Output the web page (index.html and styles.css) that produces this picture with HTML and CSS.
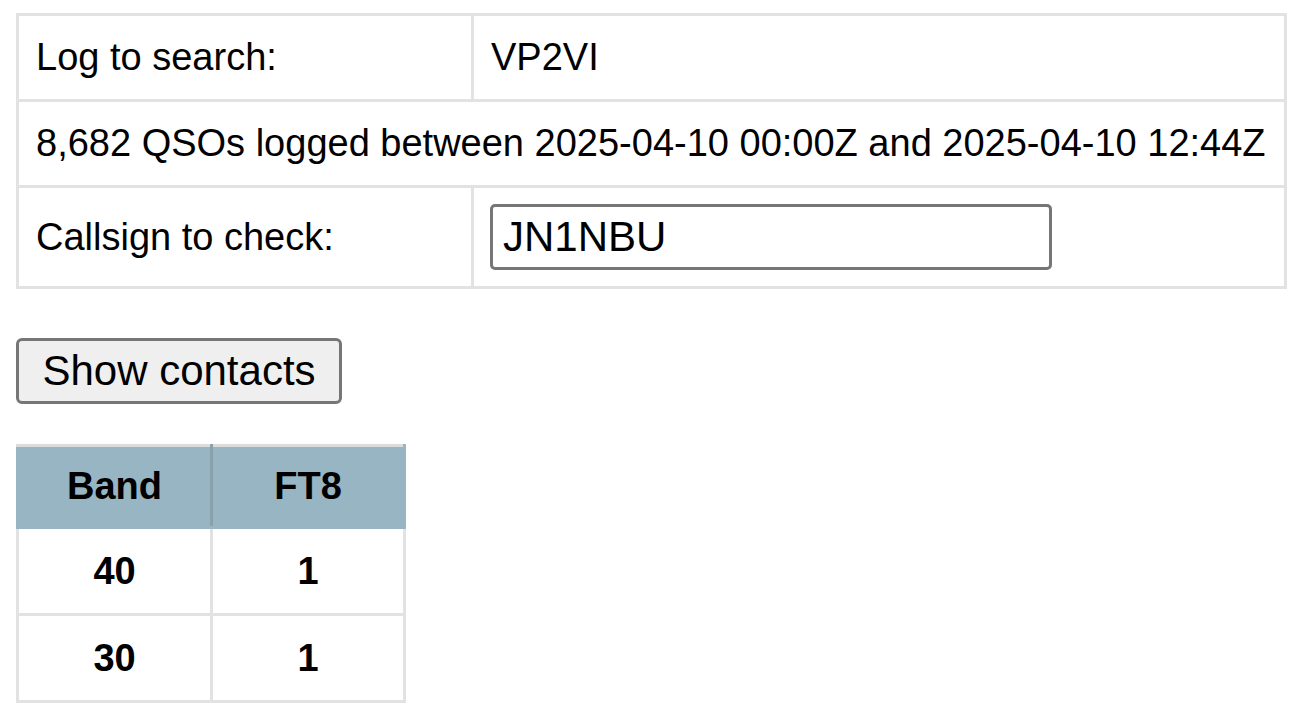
FILE: index.html
```html
<!DOCTYPE html>
<html>
<head>
<meta charset="utf-8">
<link rel="stylesheet" href="styles.css">
</head>
<body>
<table class="form">
  <tr class="r1"><td class="lbl">Log to search:</td><td>VP2VI</td></tr>
  <tr class="r2"><td colspan="2">8,682 QSOs logged between 2025-04-10 00:00Z and 2025-04-10 12:44Z</td></tr>
  <tr class="r3"><td class="lbl">Callsign to check:</td><td><input class="call" type="text" value="JN1NBU"></td></tr>
</table>
<button class="show">Show contacts</button>
<table class="res">
  <tr class="hd"><th>Band</th><th>FT8</th></tr>
  <tr><td>40</td><td>1</td></tr>
  <tr><td>30</td><td>1</td></tr>
</table>
</body>
</html>
```
FILE: styles.css
```css
html, body { margin: 0; padding: 0; background: #fff; }
body {
  padding: 13px 14px 0 16px;
  font-family: "Liberation Sans", Arial, sans-serif;
  font-size: 38px;
  color: #000;
}
table { border-collapse: collapse; }
.form { width: 1271px; }
.form td {
  border: 3px solid #e2e2e2;
  padding: 0 0 0 17px;
  text-align: left;
  vertical-align: middle;
  white-space: nowrap;
}
.form td.lbl { width: 435px; }
.form .r1 td { height: 83px; }
.form .r2 td { height: 83px; }
.form .r3 td { height: 98px; }
.call {
  display: block;
  box-sizing: border-box;
  width: 562px;
  height: 66px;
  margin: 0 0 0 -1px;
  padding: 0 10px;
  border: 3px solid #767676;
  border-radius: 5px;
  font-family: "Liberation Sans", Arial, sans-serif;
  font-size: 42px;
  color: #000;
  background: #fff;
}
.show {
  display: block;
  box-sizing: border-box;
  margin: 49px 0 0 0;
  width: 326px;
  height: 66px;
  padding: 0;
  border: 3px solid #767676;
  border-radius: 6px;
  background: #efefef;
  font-family: "Liberation Sans", Arial, sans-serif;
  font-size: 42px;
  color: #000;
}
.res { margin-top: 40px; width: 390px; }
.res th, .res td {
  width: 195px;
  text-align: center;
  font-weight: bold;
  padding: 0;
}
.res th {
  background: #97b5c3;
  border: 3px solid #98b5c3;
  border-top-color: #dcdcdc;
  border-left-color: #8aa0aa;
  height: 79px;
}
.res th:first-child { border-left-color: #98b5c3; border-right-color: #8aa0aa; }
.res td {
  border: 3px solid #e2e2e2;
  height: 84px;
}
```
